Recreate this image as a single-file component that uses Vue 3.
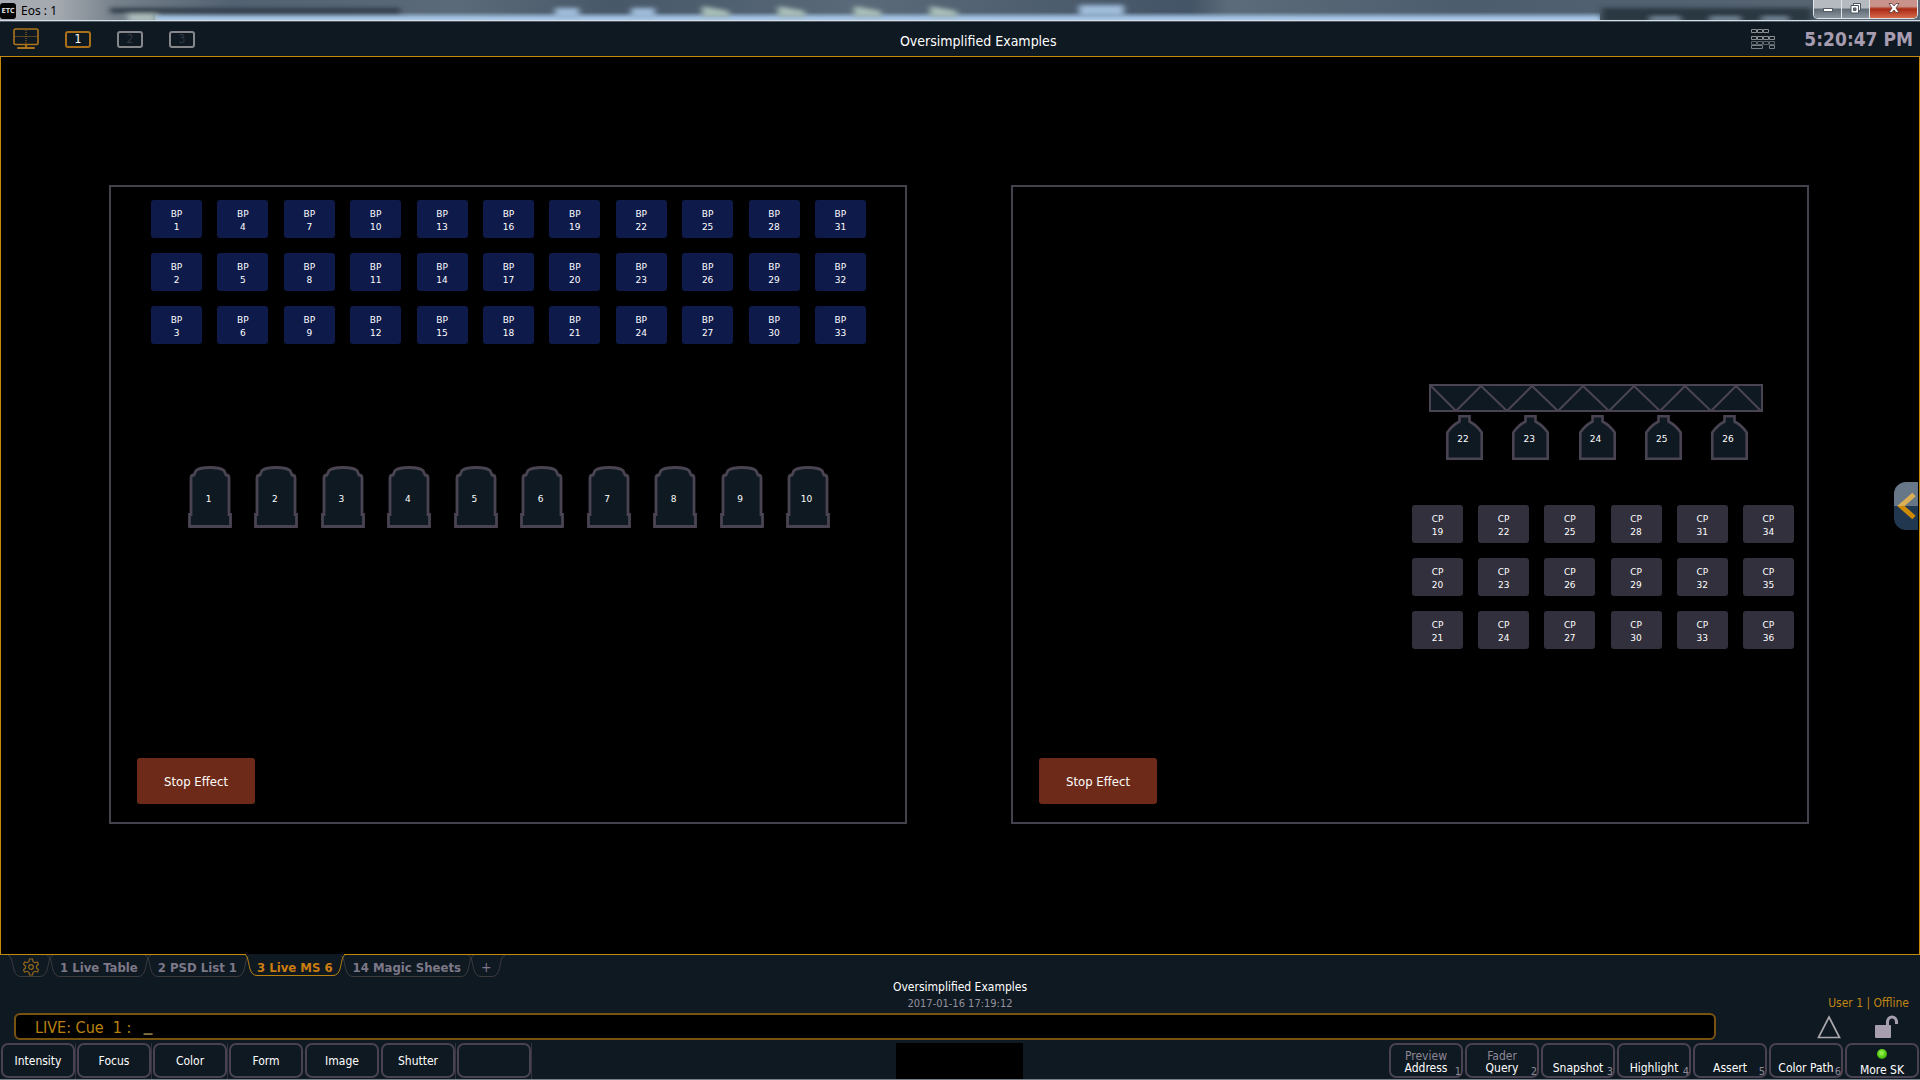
<script setup>
import { ref } from 'vue'

const bluePalettes = Array.from({ length: 33 }, (_, i) => i + 1)
const colorPalettes = Array.from({ length: 18 }, (_, i) => i + 19)
const movers = Array.from({ length: 10 }, (_, i) => i + 1)
const fresnels = [22, 23, 24, 25, 26]

const tabs = [
  { label: '1 Live Table' },
  { label: '2 PSD List 1' },
  { label: '3 Live MS 6', active: true },
  { label: '14 Magic Sheets' },
  { label: '+', thin: true },
]

const parameters = [
  { label: 'Intensity', rule: true },
  { label: 'Focus', rule: true },
  { label: 'Color', rule: true },
  { label: 'Form' },
  { label: 'Image' },
  { label: 'Shutter', rule: true },
  { label: '', rule: true },
]

const softkeys = [
  { top: 'Preview', label: 'Address', index: 1 },
  { top: 'Fader', label: 'Query', index: 2 },
  { label: 'Snapshot', index: 3 },
  { label: 'Highlight', index: 4 },
  { label: 'Assert', index: 5 },
  { label: 'Color Path', index: 6 },
]

const command = ref('_')
</script>

<template>
  <div class="app">
    <header class="titlebar">
      <svg class="aero" viewBox="0 0 1920 20" preserveAspectRatio="none" aria-hidden="true">
        <defs>
          <linearGradient id="glass" x1="0" x2="1" y1="0" y2="0">
            <stop offset="0" stop-color="#a9adb3" />
            <stop offset=".03" stop-color="#a4a9b0" />
            <stop offset=".06" stop-color="#76818b" />
            <stop offset=".12" stop-color="#536272" />
            <stop offset=".24" stop-color="#5b6a78" />
            <stop offset=".32" stop-color="#475869" />
            <stop offset=".45" stop-color="#5a6a79" />
            <stop offset=".62" stop-color="#435466" />
            <stop offset=".64" stop-color="#5c6b79" />
            <stop offset=".76" stop-color="#4c5d6e" />
            <stop offset="1" stop-color="#5a6773" />
          </linearGradient>
          <linearGradient id="sky" x1="0" x2="0" y1="0" y2="1">
            <stop offset="0" stop-color="#9dbbdc" stop-opacity="0" />
            <stop offset=".6" stop-color="#9dbbdc" />
            <stop offset="1" stop-color="#b3cde9" />
          </linearGradient>
          <filter id="soft" x="-20%" width="140%" y="-50%" height="200%"><feGaussianBlur stdDeviation="3 2" /></filter>
        </defs>
        <rect width="1920" height="20" fill="url(#glass)" />
        <rect x="155" y="12" width="1445" height="9" fill="url(#sky)" />
        <g filter="url(#soft)">
          <rect x="110" y="8" width="290" height="5" fill="#2f3b46" />
          <rect x="128" y="14" width="28" height="8" fill="#adc0bd" />
          <rect x="1602" y="8" width="210" height="14" fill="#2b3743" />
          <rect x="1650" y="17" width="30" height="4" fill="#7d91a3" />
          <rect x="1710" y="17" width="30" height="4" fill="#7d91a3" />
          <rect x="1762" y="17" width="26" height="4" fill="#7d91a3" />
        </g>
        <g fill="#9ebbd9" filter="url(#soft)">
          <rect x="555" y="8" width="24" height="10" />
          <rect x="631" y="8" width="24" height="10" />
          <rect x="1079" y="5" width="45" height="11" />
        </g>
        <g fill="#a8beb8" filter="url(#soft)">
          <path d="M702 6l27 5v6h-27z" />
          <path d="M778 6l27 5v6h-27z" />
          <path d="M854 6l27 5v6h-27z" />
          <path d="M930 6l27 5v6h-27z" />
        </g>
      </svg>
      <div class="caption">
        <span class="logo">ETC</span>
        <span class="caption-text">Eos : 1</span>
      </div>
      <div class="window-controls">
        <button type="button" class="win minimize" aria-label="Minimize">
          <svg width="12" height="10" viewBox="0 0 12 10"><rect x="1.500" y="5.500" width="9" height="3" fill="#fff" stroke="#555d66" /></svg>
        </button>
        <button type="button" class="win restore" aria-label="Restore">
          <svg width="12" height="12" viewBox="0 0 12 12" fill="none">
            <path d="M3.500 1.500h7v7h-7z" fill="#fff" stroke="#4d5660" />
            <path d="M1 3.500h7.500V11H1z" fill="#fff" stroke="#4d5660" />
            <path d="M3.500 6h2.500v2.500H3.500z" fill="#67717b" stroke="#4d5660" />
          </svg>
        </button>
        <button type="button" class="win close" aria-label="Close">
          <svg width="12" height="10" viewBox="0 0 12 10"><path d="M1 .5h3l2 2.500 2-2.500h3L8 5l3 4.500H8L6 7 4 9.500H1L4 5z" fill="#fff" stroke="#5d3a3a" stroke-width=".8" /></svg>
        </button>
      </div>
    </header>

    <nav class="toolbar">
      <div class="workspaces">
        <button type="button" class="monitor" aria-label="Displays">
          <svg width="26" height="22" viewBox="0 0 26 22" fill="none" stroke="#ad741c">
            <rect x="1" y="1" width="24" height="15.500" rx="1.500" stroke-width="1.600" />
            <path d="M13 2v14M2.500 8.500h21" stroke-dasharray="1 1" />
            <path d="M13 17v3" stroke-width="2" />
            <path d="M5 20h16" stroke-width="2" stroke-linecap="round" />
          </svg>
        </button>
        <button type="button" class="space current">1</button>
        <button type="button" class="space">2</button>
        <button type="button" class="space">3</button>
      </div>
      <h1 class="page-title">Oversimplified Examples</h1>
      <div class="tools">
        <button type="button" class="keyboard" aria-label="Virtual keyboard">
          <svg width="24" height="21" viewBox="0 0 24 21" fill="none" stroke="#8b8f92">
            <path d="M.5.5h5v3h-5zM6.500.5h5v3h-5zM12.500.5h5v3h-5z" />
            <path d="M.5 7.500h5v3h-5zM6.500 7.500h5v3h-5zM12.500 7.500h5v3h-5zM18.500 7.500h5v3h-5z" />
            <path d="M.5 12.500h5v3h-5zM6.500 12.500h5v3h-5zM12.500 12.500h5v3h-5zM18.500 12.500h5v3h-5z" stroke="#5d646a" />
            <path d="M.5 16.500h11v3H.5zM18.500 16.500h5v3h-5z" stroke="#7a8085" />
          </svg>
        </button>
        <time class="clock">5:20:47 PM</time>
      </div>
    </nav>

    <main class="sheet">
      <section class="stage">
        <div class="tiles blue">
          <button v-for="n in bluePalettes" :key="n" type="button" class="tile"><span>BP</span><span>{{ n }}</span></button>
        </div>
        <div class="movers">
          <button v-for="n in movers" :key="n" type="button" class="fixture mover">
            <svg width="44" height="62" viewBox="0 0 44 62">
              <path d="M8 4.500Q12 1.500 22 1.500T36 4.500L38 9Q41 9 41 12V48.500H42.500V60.500H1.500V48.500H3V12Q3 9 6 9z" fill="#0f1922" stroke="#4a4452" stroke-width="2.800" />
            </svg>
            <span>{{ n }}</span>
          </button>
        </div>
        <button type="button" class="stop">Stop Effect</button>
      </section>

      <section class="stage">
        <div class="rig">
          <svg class="truss" width="334" height="28" viewBox="0 0 334 28">
            <rect x="1" y="1" width="332" height="26" fill="#0f1922" stroke="#4a4452" stroke-width="2" />
            <path d="M2 2L27 27L52 2L78 27L103 2L129 27L154 2L180 27L205 2L231 27L256 2L282 27L307 2L332 27" fill="none" stroke="#4a4452" stroke-width="2" />
          </svg>
          <div class="fresnels">
            <button v-for="n in fresnels" :key="n" type="button" class="fixture">
              <svg width="37" height="45" viewBox="0 0 37 45">
                <path d="M13.500 1.300H23.500V6.500Q31 10.500 35.700 17.500V43.700H1.300V17.500Q6 10.500 13.500 6.500z" fill="#0f1922" stroke="#4a4452" stroke-width="2.600" />
              </svg>
              <span>{{ n }}</span>
            </button>
          </div>
        </div>
        <div class="tiles grey">
          <button v-for="n in colorPalettes" :key="n" type="button" class="tile"><span>CP</span><span>{{ n }}</span></button>
        </div>
        <button type="button" class="stop">Stop Effect</button>
      </section>

      <button type="button" class="drawer" aria-label="Open panel">
        <svg width="24" height="48" viewBox="0 0 24 48">
          <path d="M20 12.500L7 24L20 35.500" fill="none" stroke="#cc8a05" stroke-width="5" />
          <path d="M0 0H24V24H0z" fill="#fff" opacity=".32" />
        </svg>
      </button>
    </main>

    <footer class="console">
      <div class="tabs">
        <button type="button" class="tab settings" aria-label="Tab settings">
          <svg class="edge" width="13" height="22" viewBox="0 0 13 22"><path d="M0 .5C4 .5 4 8 6 15Q8 21.500 13 21.500" /></svg>
          <span class="tab-label">
            <svg width="16" height="18" viewBox="0 0 16 18" fill="none" stroke="#94671c" stroke-width="1.200">
              <path d="M6.500 1h3l.6 2.700 1.700 1 2.600-.8 1.100 2.200L13.500 8v2l2 1.900-1.100 2.200-2.600-.8-1.700 1-.6 2.700h-3l-.6-2.700-1.700-1-2.600.8L.5 11.900l2-1.900V8l-2-1.900 1.100-2.200 2.600.8 1.700-1z" />
              <circle cx="8" cy="9" r="2.300" />
            </svg>
          </span>
          <svg class="edge" width="13" height="22" viewBox="0 0 13 22"><path d="M13 .5C9 .5 9 8 7 15Q5 21.500 0 21.500" /></svg>
        </button>
        <button v-for="tab in tabs" :key="tab.label" type="button" class="tab" :class="{ active: tab.active, thin: tab.thin }">
          <svg class="edge" width="13" height="22" viewBox="0 0 13 22"><path d="M0 .5C4 .5 4 8 6 15Q8 21.500 13 21.500" /></svg>
          <span class="tab-label">{{ tab.label }}</span>
          <svg class="edge" width="13" height="22" viewBox="0 0 13 22"><path d="M13 .5C9 .5 9 8 7 15Q5 21.500 0 21.500" /></svg>
        </button>
      </div>

      <div class="status">
        <div class="show">
          <span class="show-name">Oversimplified Examples</span>
          <time class="show-date">2017-01-16 17:19:12</time>
        </div>
        <span class="user">User 1 | Offline</span>
      </div>

      <div class="command-row">
        <div class="command">
          <label class="prompt" for="command">LIVE: Cue&nbsp; 1 :</label>
          <input id="command" v-model="command" class="entry" type="text" />
        </div>
        <div class="indicators">
          <svg width="24" height="24" viewBox="0 0 24 24" fill="none"><path d="M12 2L22.500 22.500H1.500z" stroke="#a9a7ab" stroke-width="1.700" /></svg>
          <svg width="24" height="24" viewBox="0 0 24 24">
            <rect x="0" y="10" width="16" height="13" rx="1" fill="#a79fb0" />
            <path d="M12.500 10V7.500C12.500 0 21.500 0 21.500 7.500V9" fill="none" stroke="#a79fb0" stroke-width="3" />
          </svg>
        </div>
      </div>

      <div class="keys">
        <div class="parameters">
          <div v-for="(key, i) in parameters" :key="i" class="slot" :class="{ rule: key.rule }">
            <button type="button" class="key" :aria-label="key.label || 'Blank'">{{ key.label }}</button>
          </div>
        </div>
        <div class="readout"></div>
        <div class="softkeys">
          <button v-for="key in softkeys" :key="key.index" type="button" class="key soft">
            <span class="soft-top">{{ key.top }}</span>
            <span>{{ key.label }}</span>
            <span class="soft-index">{{ key.index }}</span>
          </button>
          <button type="button" class="key soft more">
            <i class="led"></i>
            <span>More SK</span>
          </button>
        </div>
      </div>
    </footer>
  </div>
</template>

<style>
body {
  background: #0f1922;
}
</style>

<style scoped>
.app {
  --navy: #0f1922;
  --amber: #c48a0c;
  --mauve: #484252;
  min-height: 100vh;
  display: flex;
  flex-direction: column;
  background: var(--navy);
  color: #fff;
  font-family: "DejaVu Sans Condensed", "DejaVu Sans", "Noto Sans", sans-serif;
  font-size: 12px;
}

.app *,
.app {
  box-sizing: border-box;
}

button,
input {
  margin: 0;
  padding: 0;
  border: 0;
  background: none;
  color: inherit;
  font: inherit;
}

svg {
  display: block;
}

/* Title bar */
.titlebar {
  position: relative;
  height: 22px;
  display: flex;
  justify-content: space-between;
  border-bottom: 1px solid #4d5964;
}

.aero {
  position: absolute;
  inset: 0;
  width: 100%;
  height: 21px;
  border-bottom: 1px solid #d5dde6;
}

.caption {
  position: relative;
  display: flex;
  align-items: center;
  gap: 5px;
  height: 22px;
}

.logo {
  width: 16px;
  height: 16px;
  border-radius: 3px;
  background: #050505;
  color: #d8d8d8;
  font-size: 7px;
  font-weight: bold;
  line-height: 16px;
  text-align: center;
}

.caption-text {
  color: #000;
  font-family: "Noto Sans", sans-serif;
  font-size: 12px;
  line-height: 22px;
}

.window-controls {
  position: relative;
  display: flex;
  height: 19px;
  margin-right: 2px;
  border: 1px solid #dfe5ea;
  border-top: 0;
  border-radius: 0 0 5px 5px;
  overflow: hidden;
}

.win {
  width: 28px;
  display: grid;
  place-items: center;
  padding-bottom: 2px;
  border-right: 1px solid #dfe5ea;
  background: linear-gradient(#b4bac0 0 45%, #5f6973 50%, #8b959e);
}

.close {
  width: 47px;
  border-right: 0;
  background: linear-gradient(#c9938b 0 35%, #a92a14 50%, #d66a4b);
}

/* Toolbar */
.toolbar {
  height: 34px;
  display: flex;
  align-items: center;
}

.workspaces {
  display: flex;
  align-items: center;
  gap: 26px;
  padding: 0 10px 0 13px;
}

.space {
  width: 26px;
  height: 17px;
  border: 2px solid #85878b;
  border-radius: 3px;
  color: #343845;
  line-height: 13px;
}

.space.current {
  border-color: #a97019;
  color: #fff;
}

.page-title {
  flex: 1;
  margin: 0;
  padding-top: 4px;
  font-size: 14px;
  font-weight: normal;
  text-align: center;
}

.tools {
  display: flex;
  align-items: center;
  gap: 29px;
  padding-right: 7px;
}

.clock {
  color: #a79cb0;
  font-size: 19px;
  font-weight: bold;
}

/* Magic sheet */
.sheet {
  position: relative;
  flex: 1;
  display: flex;
  align-items: center;
  gap: 104px;
  padding: 16px 110px 18px 108px;
  border: 1px solid var(--amber);
  background: #000;
}

.stage {
  flex: 1;
  height: 639px;
  display: flex;
  flex-direction: column;
  padding: 13px 13px 18px 26px;
  border: 2px solid #45424e;
}

.tiles {
  display: grid;
  grid-template-rows: repeat(3, 38px);
  grid-auto-flow: column;
  grid-auto-columns: 51px;
  justify-content: space-between;
  row-gap: 15px;
}

.blue {
  margin: 0 26px 0 14px;
}

.grey {
  width: 382px;
  margin-top: 45px;
  align-self: flex-end;
}

.tile {
  display: flex;
  flex-direction: column;
  align-items: center;
  justify-content: center;
  padding-top: 3px;
  border-radius: 3px;
  background: #0e1a4a;
  font-family: "DejaVu Sans", sans-serif;
  font-size: 9px;
  line-height: 13px;
}

.grey .tile {
  background: #32303c;
}

.movers {
  display: flex;
  justify-content: space-between;
  margin: 122px 62px 0 51px;
}

.fixture {
  display: grid;
  place-items: center;
  font-family: "DejaVu Sans", sans-serif;
  font-size: 9px;
}

.fixture > * {
  grid-area: 1 / 1;
}

.fixture span {
  padding: 3px 3px 0 0;
}

.rig {
  width: 334px;
  display: flex;
  flex-direction: column;
  gap: 3px;
  margin: 184px 31px 0 0;
  align-self: flex-end;
}

.fresnels {
  display: flex;
  justify-content: space-between;
  padding: 0 15px 0 17px;
}

.stop {
  width: 118px;
  height: 46px;
  margin-top: auto;
  padding-top: 1px;
  border-radius: 3px;
  background: #6e2a18;
  font-size: 13px;
}

.drawer {
  position: absolute;
  top: 50%;
  right: 1px;
  height: 48px;
  margin-top: -24px;
  border-radius: 12px 0 0 12px;
  background: #213750;
  overflow: hidden;
}

/* Console */
.console {
  display: flex;
  flex-direction: column;
  border-bottom: 1px solid #777f88;
}

.tabs {
  display: flex;
  padding-left: 8px;
}

.tab {
  display: flex;
  height: 22px;
  color: #7d7888;
  font-size: 13px;
  font-weight: bold;
}

.tab + .tab {
  margin-left: -6px;
}

.edge {
  flex: none;
  fill: none;
  stroke: #3b3b3e;
}

.tab-label {
  height: 22px;
  border-bottom: 1px solid #3b3b3e;
  line-height: 25px;
}

.settings .tab-label {
  padding: 3px 1px 0 2px;
}

.thin {
  font-size: 14px;
  font-weight: normal;
}

.active {
  position: relative;
  height: 23px;
  margin-top: -1px;
  background: linear-gradient(var(--navy), var(--navy)) no-repeat 2px 0 / calc(100% - 4px) 2px;
  color: #cb7d10;
}

.active .edge {
  stroke: #b9820f;
}

.active .tab-label {
  border-color: #b9820f;
  line-height: 27px;
}

.status {
  display: grid;
  grid-template-columns: 1fr auto 1fr;
  align-items: end;
  padding: 1px 11px 1px;
}

.show {
  grid-column: 2;
  display: flex;
  flex-direction: column;
  align-items: center;
}

.show-name {
  font-size: 12px;
  line-height: 18px;
}

.show-date {
  color: #96919c;
  font-size: 11px;
  line-height: 16px;
}

.user {
  justify-self: end;
  color: #c08512;
  font-size: 12px;
  line-height: 17px;
}

.command-row {
  display: flex;
  align-items: center;
  gap: 101px;
  padding: 0 21px 0 14px;
}

.command {
  flex: 1;
  height: 27px;
  display: flex;
  align-items: center;
  gap: 12px;
  padding: 0 19px;
  border: 2px solid #785210;
  border-radius: 6px;
  background: #000;
  font-size: 16px;
}

.prompt {
  padding-top: 1px;
  color: #b9800f;
}

.entry {
  flex: 1;
  height: 23px;
  padding-bottom: 4px;
  color: #857647;
  font-family: "DejaVu Sans", sans-serif;
  font-size: 18px;
  font-weight: bold;
}

.indicators {
  display: flex;
  gap: 34px;
}

.keys {
  display: grid;
  grid-template-columns: 1fr 127px 1fr;
  padding: 3px 1px 0 0;
}

.parameters {
  display: flex;
}

.slot {
  width: 76px;
  padding-left: 1px;
  border-right: 1px solid transparent;
}

.rule {
  border-color: #34323e;
}

.key {
  width: 74px;
  height: 35px;
  border: 2px solid var(--mauve);
  border-radius: 7px;
}

.readout {
  background: #000;
}

.softkeys {
  display: flex;
  justify-content: flex-end;
  gap: 2px;
}

.soft {
  position: relative;
  display: flex;
  flex-direction: column;
  align-items: center;
  justify-content: flex-end;
  padding-bottom: 2px;
  line-height: 12px;
  white-space: nowrap;
}

.soft-top {
  color: #8d8896;
}

.soft-index {
  position: absolute;
  right: 0;
  bottom: -2px;
  color: #8d8896;
  font-size: 11px;
}

.more {
  gap: 5px;
  padding-bottom: 0;
}

.led {
  width: 10px;
  height: 10px;
  border-radius: 50%;
  background: radial-gradient(circle at 45% 40%, #a6f75a, #4fc80f 55%, #1e5d10);
}
</style>
